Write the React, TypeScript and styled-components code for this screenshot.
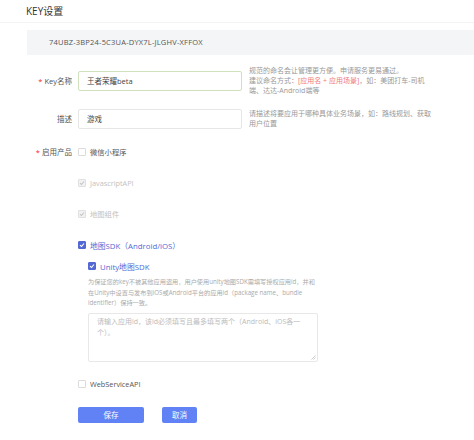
import React from 'react'
import styled, { createGlobalStyle } from 'styled-components'

const GlobalStyle = createGlobalStyle`
  html, body {
    margin: 0;
    padding: 0;
    background: #fff;
  }
  body {
    font-family: "Open Sans", "Noto Sans CJK SC", sans-serif;
    color: #333;
  }
`

const Wrapper = styled.div`
  width: 474px;
  height: 440px;
  background: #fff;
  overflow: hidden;
`
const Header = styled.div`
  height: 22px;
  padding-left: 26px;
  font-size: 10px;
  line-height: 22px;
  color: #333;
  border-bottom: 1px solid #f3f3f3;
`
const Body = styled.div`
  padding-left: 27px;
`
const KeyBand = styled.div`
  margin-top: 7px;
  height: 25px;
  padding-left: 22px;
  background: #f3f5f7;
  font-size: 7.5px;
  line-height: 25px;
  letter-spacing: 0.2px;
  color: #555;
`
const Form = styled.div`
  margin-top: 11px;
  display: flex;
  flex-direction: column;
`
const Row = styled.div<{ $top?: number; $align?: string }>`
  display: flex;
  align-items: ${p => p.$align || 'center'};
  margin-top: ${p => p.$top || 0}px;
`
const Label = styled.div`
  width: 45px;
  margin-right: 6px;
  text-align: right;
  font-size: 7.5px;
  line-height: 14px;
  color: #555;
  flex-shrink: 0;
`
const Star = styled.span`
  color: #f5222d;
  margin-right: 2px;
`
const Input = styled.div<{ $active?: boolean }>`
  width: 164px;
  height: 20px;
  box-sizing: border-box;
  border: 1px solid ${p => (p.$active ? '#cfe2bd' : '#e6e6e6')};
  border-radius: 2px;
  padding-left: 8px;
  font-size: 7.5px;
  line-height: 18px;
  color: #444;
  flex-shrink: 0;
`
const Hint = styled.div`
  margin-left: 7px;
  width: 184px;
  font-size: 7px;
  line-height: 10px;
  color: #999;
`
const Red = styled.span`
  color: #ef7a80;
`
const Products = styled.div`
  display: flex;
  flex-direction: column;
`
const Item = styled.div<{ $top?: number; $indent?: number }>`
  display: flex;
  align-items: center;
  height: 14px;
  margin-top: ${p => p.$top || 0}px;
  margin-left: ${p => p.$indent || 0}px;
`
const Box = styled.span<{ $state: 'off' | 'on' | 'disabled' }>`
  width: 8px;
  height: 8px;
  box-sizing: border-box;
  border-radius: 1px;
  margin-right: 4px;
  display: inline-flex;
  align-items: center;
  justify-content: center;
  border: 1px solid
    ${p => (p.$state === 'on' ? '#5468d4' : p.$state === 'disabled' ? '#e0e0e0' : '#dcdcdc')};
  background: ${p => (p.$state === 'on' ? '#5468d4' : p.$state === 'disabled' ? '#f2f2f2' : '#fff')};
`
const ItemText = styled.span<{ $tone: 'normal' | 'muted' | 'blue' }>`
  font-size: ${p => (p.$tone === 'blue' ? 7.8 : 7.3)}px;
  color: ${p => (p.$tone === 'blue' ? '#5468d4' : p.$tone === 'muted' ? '#c2c2c2' : '#555')};
`
const Note = styled.div`
  margin: 4px 0 0 10px;
  width: 230px;
  font-size: 6.2px;
  line-height: 10.5px;
  color: #aaa;
`
const TextArea = styled.div`
  margin: 4px 0 0 10px;
  width: 230px;
  height: 49px;
  box-sizing: border-box;
  border: 1px solid #e8e8e8;
  border-radius: 2px;
  padding: 2px 8px;
  font-size: 7px;
  line-height: 11px;
  color: #bbb;
  position: relative;
`
const Grip = styled.svg`
  position: absolute;
  right: 1px;
  bottom: 1px;
`
const Buttons = styled.div`
  display: flex;
  gap: 18px;
  margin: 16px 0 0 51px;
`
const Button = styled.div<{ $w: number }>`
  width: ${p => p.$w}px;
  height: 16px;
  border-radius: 2px;
  background: #6182f5;
  color: #fff;
  font-size: 7.5px;
  line-height: 16px;
  text-align: center;
`

const Check = ({ color }: { color: string }) => (
  <svg width="6" height="6" viewBox="0 0 6 6">
    <path d="M1 3.1 L2.5 4.5 L5 1.5" fill="none" stroke={color} strokeWidth="1.1" />
  </svg>
)

const CheckBox = ({ state }: { state: 'off' | 'on' | 'disabled' }) => (
  <Box $state={state}>
    {state === 'on' && <Check color="#fff" />}
    {state === 'disabled' && <Check color="#c4c4c4" />}
  </Box>
)

const App = (): JSX.Element => (
  <Wrapper>
    <GlobalStyle />
    <Header>KEY设置</Header>
    <Body>
      <KeyBand>74UBZ-3BP24-5C3UA-DYX7L-JLGHV-XFFOX</KeyBand>
      <Form>
        <Row>
          <Label><Star>*</Star>Key名称</Label>
          <Input $active>王者荣耀beta</Input>
          <Hint>
            规范的命名会让管理更方便。申请服务更易通过。
            <br />
            建议命名方式：<Red>[应用名 + 应用场景]</Red>，如：美团打车-司机端、达达-Android端等
          </Hint>
        </Row>
        <Row $top={13}>
          <Label>描述</Label>
          <Input>游戏</Input>
          <Hint>请描述将要应用于哪种具体业务场景，如：路线规划、获取用户位置</Hint>
        </Row>
        <Row $top={16} $align="flex-start">
          <Label><Star>*</Star>启用产品</Label>
          <Products>
            <Item>
              <CheckBox state="off" />
              <ItemText $tone="normal">微信小程序</ItemText>
            </Item>
            <Item $top={17}>
              <CheckBox state="disabled" />
              <ItemText $tone="muted">JavascriptAPI</ItemText>
            </Item>
            <Item $top={17}>
              <CheckBox state="disabled" />
              <ItemText $tone="muted">地图组件</ItemText>
            </Item>
            <Item $top={17}>
              <CheckBox state="on" />
              <ItemText $tone="blue">地图SDK（Android/iOS）</ItemText>
            </Item>
            <Item $top={7} $indent={10}>
              <CheckBox state="on" />
              <ItemText $tone="blue">Unity地图SDK</ItemText>
            </Item>
            <Note>
              为保证您的key不被其他应用盗用，用户使用unity地图SDK需填写授权应用id，并和在Unity中设置与发布到iOS或Android平台的应用id（package name、bundle identifier）保持一致。
            </Note>
            <TextArea>
              请输入应用id，该id必须填写且最多填写两个（Android、iOS各一个）。
              <Grip width="5" height="5" viewBox="0 0 5 5">
                <path d="M4.5 0.5 L0.5 4.5 M4.5 2.5 L2.5 4.5" stroke="#bbb" strokeWidth="0.7" />
              </Grip>
            </TextArea>
            <Item $top={15}>
              <CheckBox state="off" />
              <ItemText $tone="normal">WebServiceAPI</ItemText>
            </Item>
          </Products>
        </Row>
        <Buttons>
          <Button $w={66}>保存</Button>
          <Button $w={35}>取消</Button>
        </Buttons>
      </Form>
    </Body>
  </Wrapper>
)

export default App
